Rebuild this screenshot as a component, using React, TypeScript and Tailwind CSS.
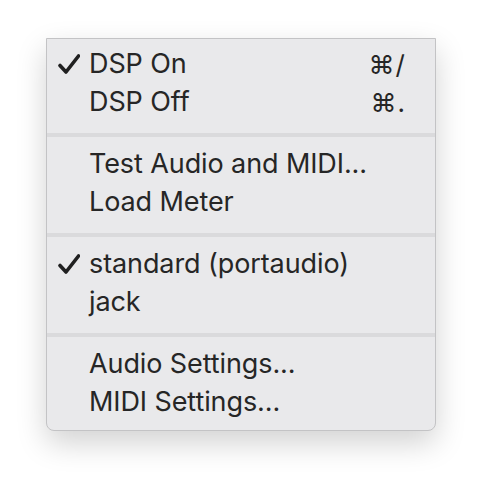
import React from "react";

type Item = { label: string; checked?: boolean; shortcut?: string };

const SECTIONS: Item[][] = [
  [
    { label: "DSP On", checked: true, shortcut: "⌘/" },
    { label: "DSP Off", shortcut: "⌘." },
  ],
  [{ label: "Test Audio and MIDI..." }, { label: "Load Meter" }],
  [{ label: "standard (portaudio)", checked: true }, { label: "jack" }],
  [{ label: "Audio Settings..." }, { label: "MIDI Settings..." }],
];

function Check() {
  return (
    <svg viewBox="0 0 22 20" className="w-[22px] h-[20px]" fill="none">
      <path
        d="M2 11.5 L8 18 L20.5 2"
        stroke="#202020"
        strokeWidth="3.6"
        strokeLinecap="round"
        strokeLinejoin="round"
      />
    </svg>
  );
}

function MenuRow({ item }: { item: Item }) {
  return (
    <div className="relative h-[38px] flex items-center pb-[4px] pl-[42px] pr-[29px] text-[27px] tracking-[-0.1px] text-[#262626]">
      {item.checked && (
        <span className="absolute left-[11px] top-[7px]">
          <Check />
        </span>
      )}
      <span className="flex-1 whitespace-nowrap">{item.label}</span>
      {item.shortcut && (
        <span className="whitespace-nowrap text-[26px] tracking-[1px]">
          {item.shortcut}
        </span>
      )}
    </div>
  );
}

export default function App() {
  return (
    <div className="min-h-screen bg-white pt-[38px] pl-[46px] font-['Inter','DejaVu_Sans',sans-serif]">
      <div className="w-[390px] h-[393px] border border-[#c3c3c5] rounded-b-[8px] bg-[#e9e9eb] py-[8px] shadow-[0_12px_30px_rgba(0,0,0,0.18)]">
        {SECTIONS.map((section, i) => (
          <div key={i}>
            {i > 0 && <div className="my-[10px] h-[4px] bg-[#dadadc]" />}
            {section.map((item) => (
              <MenuRow key={item.label} item={item} />
            ))}
          </div>
        ))}
      </div>
    </div>
  );
}
